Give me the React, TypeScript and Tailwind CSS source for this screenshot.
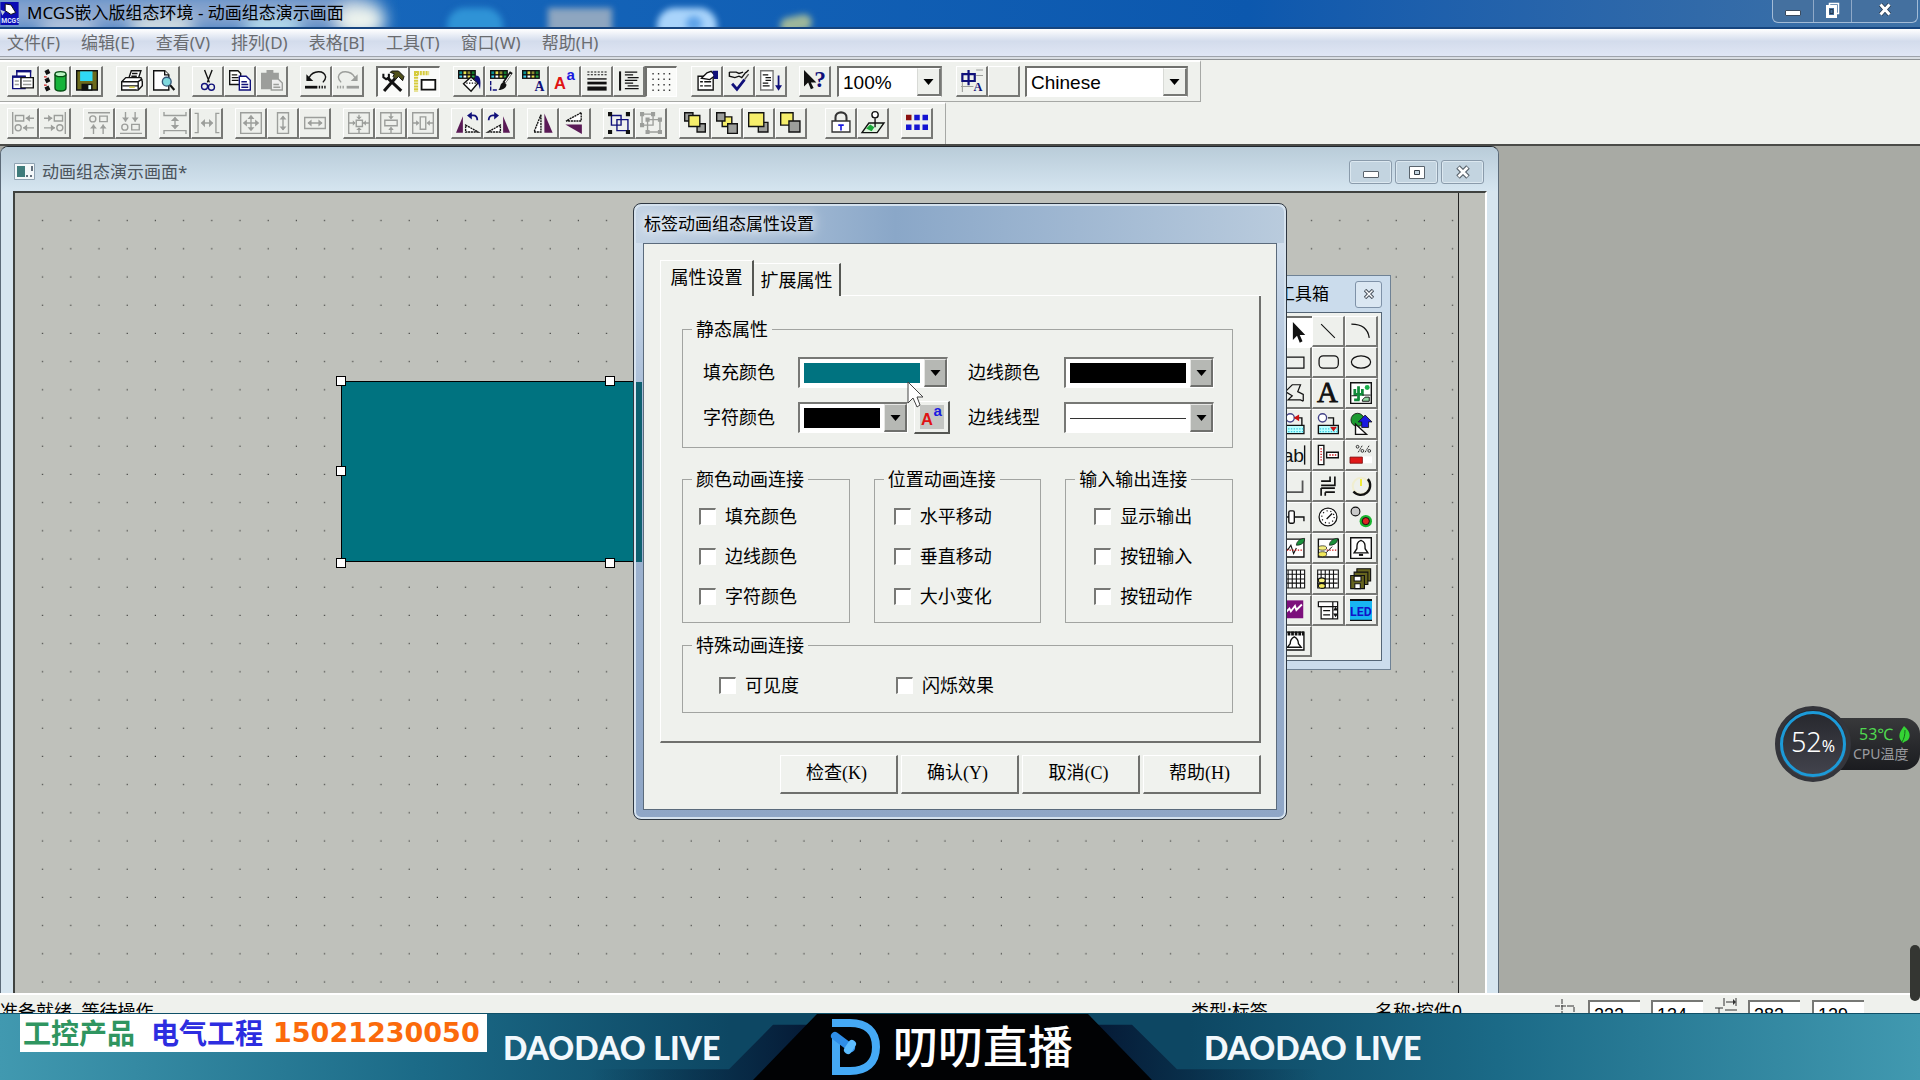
import React from "react";

const UI = "font-['Noto_Sans','Noto_Sans_CJK_SC',sans-serif]";
const SONG = "font-['Liberation_Serif','Noto_Sans_CJK_SC',serif]";

const K = "#111";
const N = "#10107a";
const G = "#9c9e9b";

/* ---------- toolbar drawings, 16 x 16 grid ---------- */

const palette = (
  <>
    <path d="M0 0h13v6.500H0z" fill={K} />
    <path d="M1 1h2v2H1z" fill="#0b8f8f" />
    <path d="M4 1h2v2H4z" fill="#e8e04a" />
    <path d="M7 1h2v2H7z" fill="#8b8b30" />
    <path d="M10 1h2v2h-2z" fill="#157a2d" />
    <path d="M1 4h2v1.500H1z" fill="#3fd4f0" />
    <path d="M4 4h2v1.500H4z" fill="#fff" />
    <path d="M7 4h2v1.500H7z" fill="#e8e04a" />
    <path d="M10 4h2v1.500h-2z" fill="#2fae4a" />
  </>
);

const icons: Record<string, React.ReactNode> = {
  newWin: (
    <g fill="#fff" stroke={N}>
      <path d="M3.5 .5h10v9h-10z" />
      <path d="M3 1h11" strokeWidth="1.500" />
      <path d="M.5 4.5h9v9h-9z" />
      <path d="M0 5h10" strokeWidth="1.500" />
      <path d="M6.5 5.500h9v7.500h-9z" stroke={K} />
      <path d="M8 8h6M8 10.500h6M2 8h3M2 10.500h3" stroke={G} />
    </g>
  ),
  db: (
    <g>
      <path d="M1 1l2-1 1 2-2 1zM1 7l2-1 1 2-2 1zM1 13l2-1 1 2-2 1z" stroke={K} fill={K} />
      <path d="M0 5h2M0 11h2" stroke="#c22" />
      <path d="M8 3v10c0 3 8 3 8 0V3" fill="#16b33a" stroke="#064d14" />
      <ellipse cx="12" cy="3" rx="4" ry="1.8" fill="#b9f5c2" stroke="#064d14" />
    </g>
  ),
  save: (
    <g>
      <path d="M.5 .5h15v14h-15z" fill="#6b6a1c" stroke={K} />
      <path d="M3 1h9v7H3z" fill="#2fd8f5" />
      <path d="M4 10h8v5H4z" fill={K} />
      <path d="M9 11h2v3H9z" fill="#dff" />
    </g>
  ),
  print: (
    <g fill="#fff" stroke={K}>
      <path d="M5.5 6.5l2-6h7l-2 6z" />
      <path d="M8 2.500h4M7.500 4.500h4" />
      <path d="M.5 8.500l3-3h11l1 3v3l-3 3h-12z" />
      <path d="M.5 8.500h12v6M12.500 8.500l3-2M1 11.500h11" />
      <path d="M6 12.500h4" stroke="#d9cf3f" />
    </g>
  ),
  preview: (
    <g fill="#fff" stroke={K}>
      <path d="M.5 .5h8l3 3v11h-11z" />
      <path d="M8.500 .5v3h3" />
      <circle cx="10" cy="8.500" r="3.200" fill="#7fd9de" stroke="#357" />
      <path d="M12.500 11l3 3.500" strokeWidth="1.600" />
    </g>
  ),
  cut: (
    <g fill="none">
      <path d="M5.500 0l3.500 9M11 0L7.500 9" stroke={K} />
      <circle cx="5.500" cy="12" r="2.200" stroke={N} />
      <circle cx="10.500" cy="12.500" r="2.200" stroke={N} />
    </g>
  ),
  copy: (
    <g fill="#fff" stroke={N}>
      <path d="M.5 .5h6l2 2v8h-8z" stroke={K} />
      <path d="M2 3.500h4M2 5.500h5M2 7.500h5" stroke={K} />
      <path d="M7.500 4.500h5l3 3v7h-8z" />
      <path d="M9 8.500h4M9 10.500h5M9 12.500h5" />
    </g>
  ),
  paste: (
    <g>
      <path d="M0 2h4V0h5v2h4v12H0z" fill={G} />
      <path d="M7.500 6.500h5l3 3v5h-8z" fill="#eee" stroke={G} />
      <path d="M9 10.500h4M9 12.500h5" stroke={G} />
    </g>
  ),
  undo: (
    <g fill="none" stroke={K}>
      <path d="M3 5.500C6 0 14 0 15 5c0 2-1 3-2 4" />
      <path d="M1 3v5h5z" fill={K} stroke="none" />
      <path d="M0 12.500h9" strokeWidth="2" />
      <path d="M10 12.500h6" strokeWidth="2" strokeDasharray="1 1" />
    </g>
  ),
  redo: (
    <g fill="none" stroke={G}>
      <path d="M13 5.500C10 0 2 0 1 5c0 2 1 3 2 4" />
      <path d="M15 3v5h-5z" fill={G} stroke="none" />
      <path d="M16 12.500H7" strokeWidth="2" />
      <path d="M0 12.500h6" strokeWidth="2" strokeDasharray="1 1" />
    </g>
  ),
  tools: (
    <g fill="none" stroke={K}>
      <path d="M1.500 14.500l8-9" strokeWidth="2.200" />
      <path d="M4 5l10 9.500" strokeWidth="2.200" />
      <path d="M7 0h5l4 4-1 3-3-3-2 2-2-2 1-2-3-1z" fill="#4f4f1a" strokeWidth=".7" />
      <path d="M1 2l0 2.500 2 1.500 2-1.500L5 2" strokeWidth="1.500" />
    </g>
  ),
  ruler: (
    <g fill="none">
      <path d="M0 1.500h11M1.500 0v15" stroke="#d6cb3c" strokeWidth="3" strokeDasharray="1.500 .6" />
      <path d="M5.500 6.500h10v7h-10z" fill="#fff" stroke={K} strokeWidth="1.300" />
    </g>
  ),
  fill: (
    <g>
      {palette}
      <path d="M4 10l5.500-5 5 4.500-5 6z" fill="#fff" stroke={K} />
      <path d="M9.500 1v7M6 9.500h7" stroke={K} strokeDasharray="1 1" />
      <path d="M13 4c3 0 4 3 3 10-1-3-1-5-4-6.500z" fill={N} />
    </g>
  ),
  pen: (
    <g>
      {palette}
      <path d="M.5 8v6.500h5" fill="none" stroke={N} strokeDasharray="3 1" />
      <path d="M15.500 1.500l-5.500 8" stroke={K} strokeWidth="2.400" />
      <path d="M15 3l-4 6" stroke="#fff" strokeWidth=".8" />
      <path d="M10 9c-3 0-2 4-4 5.500 4 0 6-2 6-4z" fill={K} />
    </g>
  ),
  textColor: (
    <g>
      {palette}
      <text x="9" y="15.500" fontSize="10" fontWeight="700" fontFamily="Liberation Serif" fill={N}>A</text>
    </g>
  ),
  font: (
    <g fontFamily="Liberation Sans" fontWeight="700">
      <text x="0" y="14" fontSize="12" fill="#e01313">A</text>
      <text x="9" y="7" fontSize="11" fill="#1a1ae0">a</text>
    </g>
  ),
  lines: (
    <g stroke={K}>
      <path d="M1 1.500h14M1 3.500h14" strokeDasharray="1.500 1" strokeWidth=".8" />
      <path d="M1 6.500h14" />
      <path d="M1 9.500h14" strokeWidth="2" />
      <path d="M1 13.500h14" strokeWidth="3" />
    </g>
  ),
  align: (
    <g stroke={K}>
      <path d="M1.500 1v14" strokeWidth="1.500" />
      <path d="M5 1.500h9M5 3.500h6M7 5.500h8M5 7.500h9M5 9.500h6M7 11.500h8M5 13.500h10" strokeWidth=".9" />
    </g>
  ),
  grid: (
    <path d="M1 2h15M1 6h15M1 10h15M1 14h15" stroke="#333" strokeDasharray="1 3" />
  ),
  props: (
    <g fill="#fff" stroke={K}>
      <path d="M1.500 4.500h11v10h-11z" />
      <path d="M3 8.500h2M6 8.500h5M3 11.500h2M6 11.500h5" />
      <path d="M4 6l4-4 3-1 3 3-4 3z" />
      <path d="M12.500 1h3v5h-2z" fill={N} stroke={N} />
    </g>
  ),
  check: (
    <g fill="none" stroke={K}>
      <path d="M1 1.500h5l2 1 3-1M1 1.500v3l4 1 3-1 2 1 3-4M13 2l2-2" />
      <path d="M3 10l3.500 4L12 7" stroke={N} strokeWidth="2" />
      <path d="M12 7l3-4" stroke="#555" />
    </g>
  ),
  sort: (
    <g fill="#fff" stroke={K}>
      <path d="M.5 .5h9v14h-9z" stroke="#777" />
      <path d="M2 3.500h4M4 5.500h4M4 7.500h4M2 9.500h4M2 11.500h5" />
      <path d="M13.500 4v9" stroke={N} strokeWidth="1.300" />
      <path d="M11 11h5l-2.500 4z" fill={N} stroke="none" />
    </g>
  ),
  help: (
    <g>
      <path d="M0 0v12l3-3 2 5 2-1-2-4h4z" fill={K} />
      <text x="7.500" y="12" fontSize="17" fontWeight="700" fontFamily="Liberation Serif" fill={N}>?</text>
    </g>
  ),
  lang: (
    <g fill="none">
      <path d="M1 2v14M11 0h5M11 4h5M0 12h9" stroke={G} strokeWidth=".8" />
      <path d="M1 3h9v5H1zM5.500 0v11" stroke={N} strokeWidth="1.600" />
      <text x="9" y="15" fontSize="9" fontWeight="700" fontFamily="Liberation Serif" fill={N}>A</text>
    </g>
  ),
  blank: null,
  alignL: (
    <g fill="none" stroke={G}>
      <path d="M.5 0v16M2.500 2.500h6v4h-6zM10 4.500h6M8 11.500h8" />
      <circle cx="4.500" cy="11.500" r="2.200" />
      <path d="M13 2l-3 2.500 3 2.500zM11 9l-3 2.500 3 2.500z" fill={G} stroke="none" />
    </g>
  ),
  alignR: (
    <g fill="none" stroke={G}>
      <path d="M15.500 0v16M7.500 2.500h6v4h-6zM0 4.500h6M0 11.500h8" />
      <circle cx="11.500" cy="11.500" r="2.200" />
      <path d="M3 2l3 2.500-3 2.500zM5 9l3 2.500-3 2.500z" fill={G} stroke="none" />
    </g>
  ),
  alignT: (
    <g fill="none" stroke={G}>
      <path d="M0 .5h16M8.500 3h5.500v4H8.500zM4 9v7M11 9v7" />
      <circle cx="3.500" cy="5" r="2.200" />
      <path d="M1.500 12L4 9l2.500 3zM8.500 12L11 9l2.500 3z" fill={G} stroke="none" />
    </g>
  ),
  alignB: (
    <g fill="none" stroke={G}>
      <path d="M0 15.500h16M8.500 9h5.500v4H8.500zM4 0v7M11 0v7" />
      <circle cx="3.500" cy="11" r="2.200" />
      <path d="M1.500 4L4 7l2.500-3zM8.500 4L11 7l2.500-3z" fill={G} stroke="none" />
    </g>
  ),
  spaceV: (
    <g fill="none" stroke={G}>
      <path d="M0 0v2.500h16V0M0 16v-2.500h16V16M8 4v8" />
      <path d="M5 6.500L8 3.500l3 3zM5 9.500l3 3 3-3z" fill={G} stroke="none" />
    </g>
  ),
  spaceH: (
    <g fill="none" stroke={G}>
      <path d="M-1 1h2.500v14H-1M17 1h-2.500v14H17M4 8h8" />
      <path d="M6.500 5L3.500 8l3 3zM9.500 5l3 3-3 3z" fill={G} stroke="none" />
    </g>
  ),
  sizeAll: (
    <g fill="none" stroke={G}>
      <path d="M.5 .5h15v15H.5zM8 3v10M3 8h10" />
      <path d="M5.500 5L8 2l2.500 3zM5.500 11L8 14l2.500-3zM5 5.500L2 8l3 2.500zM11 5.500L14 8l-3 2.500z" fill={G} stroke="none" />
    </g>
  ),
  sizeV: (
    <g fill="none" stroke={G}>
      <path d="M4 .5h8v15H4zM8 3v10" />
      <path d="M5.500 5.500L8 2.500l2.500 3zM5.500 10.500l2.500 3 2.500-3z" fill={G} stroke="none" />
    </g>
  ),
  sizeH: (
    <g fill="none" stroke={G}>
      <path d="M.5 4h15v8H.5zM3 8h10" />
      <path d="M5.500 5.500L2.500 8l3 2.500zM10.500 5.500l3 2.500-3 2.500z" fill={G} stroke="none" />
    </g>
  ),
  ctrAll: (
    <g fill="none" stroke={G}>
      <path d="M.5 .5h15v15H.5zM6 6h4.500v4.500H6zM8 2v3M8 12v3M1 8h4M11 8h4" />
      <path d="M6 3.500h4L8 5.500zM6 13h4l-2-2zM3.500 6v4l2-2zM13 6v4l-2-2z" fill={G} stroke="none" />
    </g>
  ),
  ctrV: (
    <g fill="none" stroke={G}>
      <path d="M.5 .5h15v15H.5zM3.500 6h9v4h-9zM8 1v3M8 12v3" />
      <path d="M6 3h4L8 5.500zM6 13h4l-2-2.500z" fill={G} stroke="none" />
    </g>
  ),
  ctrH: (
    <g fill="none" stroke={G}>
      <path d="M.5 .5h15v15H.5zM6 3.500h4v9H6zM1 8h3M12 8h3" />
      <path d="M3 6v4l2.500-2zM13 6v4l-2.500-2z" fill={G} stroke="none" />
    </g>
  ),
  rotL: (
    <g>
      <path d="M5 3v12H0z" fill="#5a1a56" />
      <path d="M7 9.500l9 5H7z" fill="#fff" stroke={K} strokeDasharray="1.500 .5" />
      <path d="M10 2.500h2.500c2 0 3 1.500 3 3.500" fill="none" stroke={N} strokeWidth="1.300" />
      <path d="M11.500 0v5.500L8 2.500z" fill={N} />
    </g>
  ),
  rotR: (
    <g>
      <path d="M11 3v12h5z" fill="#5a1a56" />
      <path d="M9 9.500l-9 5h9z" fill="#fff" stroke={K} strokeDasharray="1.500 .5" />
      <path d="M6 2.500H3.500c-2 0-3 1.500-3 3.500" fill="none" stroke={N} strokeWidth="1.300" />
      <path d="M4.500 0v5.500L8 2.500z" fill={N} />
    </g>
  ),
  flipH: (
    <g>
      <path d="M6.500 2v12.500h-5z" fill="#fff" stroke={K} strokeDasharray="1.500 .5" />
      <path d="M9 1v14h6z" fill="#5a1a56" />
    </g>
  ),
  flipV: (
    <g>
      <path d="M12.500 .5v6h-11z" fill="#fff" stroke={K} strokeDasharray="1.500 .5" />
      <path d="M13 16V9H1z" fill="#5a1a56" />
    </g>
  ),
  group: (
    <g>
      <path d="M2.500 2.500h7v7h-7zM6.500 5.500h8v8h-8z" fill="#f0f1ee" stroke={N} />
      <path d="M0 0h3v3H0zM13 0h3v3h-3zM0 13h3v3H0zM13 13h3v3h-3z" fill={K} />
    </g>
  ),
  ungroup: (
    <g>
      <path d="M1.500 1.500h8v8h-8zM5.500 5.500h9v9h-9z" fill="#f0f1ee" stroke={G} />
      <path d="M0 0h3v3H0zM8 0h3v3H8zM0 8h3v3H0zM4 4h3v3H4zM13 4h3v3h-3zM4 13h3v3H4zM13 13h3v3h-3z" fill={G} />
    </g>
  ),
  front: (
    <g stroke={K}>
      <path d="M.5 .5h6v6h-6zM9.500 8.500h6v6h-6z" fill={G} />
      <path d="M3.500 2.500h8v8h-8z" fill="#f6ee6b" />
    </g>
  ),
  back: (
    <g stroke={K}>
      <path d="M4.500 3.500h7v7h-7z" fill="#f6ee6b" />
      <path d="M.5 .5h6v6h-6zM8.500 8.500h7v7h-7z" fill={G} />
    </g>
  ),
  forward: (
    <g stroke={K}>
      <path d="M7.500 7.500h7v7h-7z" fill={G} />
      <path d="M.5 .5h11v10H.5z" fill="#f6ee6b" />
    </g>
  ),
  backward: (
    <g stroke={K}>
      <path d="M.5 .5h9v9h-9z" fill="#f6ee6b" />
      <path d="M6.500 6.500h8v8h-8z" fill={G} />
    </g>
  ),
  lock: (
    <g fill="#fff" stroke="#333">
      <path d="M4 7V4c0-5 8-5 8 0v3" fill="none" strokeWidth="1.500" />
      <path d="M1.500 6.500h13v8h-13z" />
      <path d="M6 9.500h4M8 9.500v4" stroke="#1a1ae0" strokeWidth="1.200" />
    </g>
  ),
  pin: (
    <g stroke={K}>
      <path d="M5 8h11l-5 7H0z" fill="#dff3df" />
      <path d="M3 12l3-3 3 2-2 3z" fill="#19a838" stroke="none" />
      <circle cx="9.500" cy="2" r="2.300" fill="#fff" />
      <path d="M9.500 4.500V11" />
    </g>
  ),
  dots: (
    <g fill="#1414d2">
      <path d="M0 2h4v4H0z" fill="#8a1010" />
      <path d="M6 2h4v4H6zM12 2h4v4h-4zM0 9h4v4H0zM6 9h4v4H6zM12 9h4v4h-4z" />
    </g>
  ),

  /* toolbox */
  arrow: <path d="M5 0v13l3-3 2 5 2-1-2-4.500h4z" fill={K} />,
  line: <path d="M3 3l10 10" stroke={K} strokeWidth=".8" />,
  arc: <path d="M1 3c7 0 12 3 13 10" stroke={K} fill="none" strokeWidth=".9" />,
  rect: <path d="M0 4.500h14.500v8H0z" stroke={K} fill="none" strokeWidth=".9" />,
  rrect: <rect x="1.500" y="3.500" width="14" height="9" rx="3" stroke={K} fill="none" strokeWidth=".9" />,
  ellipse: <ellipse cx="8" cy="8" rx="7" ry="4.500" stroke={K} fill="none" strokeWidth=".9" />,
  poly: <path d="M14 14l-2-1H3l3-3-5-3M1 7l5-5h6l-2 5 4 2v5" stroke={K} fill="none" strokeWidth=".9" />,
  bigA: <text x="0" y="14.500" fontSize="21" fontFamily="Liberation Serif" fill={K} stroke={K} strokeWidth=".6">A</text>,
  cactus: (
    <g>
      <path d="M.5 .5h15v15H.5z" fill="#fff" stroke={K} />
      <path d="M3.500 5v4h5.500V5M6.200 3v10M3 13h4" stroke="#0f8a3a" strokeWidth="2" fill="none" />
      <circle cx="12.500" cy="4" r="1.800" fill="#18b04a" />
      <path d="M1 10h4M9 9.500h6M9 13l2-2h3v3H9z" stroke={K} strokeWidth=".7" fill="#8fd8a0" />
    </g>
  ),
  pumpA: (
    <g fill="none" stroke={K}>
      <path d="M0 9h14.500v6H0z" fill="#bff" />
      <path d="M1 11.500h13M1 13.500h13" stroke="#39c9e0" strokeDasharray="1 1" />
      <circle cx="4.500" cy="3.500" r="3" fill="#fff" stroke="#448" />
      <path d="M8 3.500h5v5.500" />
      <path d="M11 1v5L7 3.500z" fill="#c11" stroke="none" />
    </g>
  ),
  pumpB: (
    <g fill="none" stroke={K}>
      <path d="M1 9h14.500v6H1z" fill="#bff" />
      <path d="M2 11.500h13M2 13.500h13" stroke="#39c9e0" strokeDasharray="1 1" />
      <circle cx="4" cy="3.500" r="3" fill="#fff" stroke="#448" />
      <path d="M8 3.500h4v5.500" />
      <path d="M9.500 10h5L12 13.500z" fill="#c11" stroke="none" />
    </g>
  ),
  shapes: (
    <g>
      <circle cx="5.500" cy="5" r="4.800" fill="#1b9a30" stroke={K} strokeWidth=".6" />
      <path d="M4 8v7.500h8z" fill="#fff" stroke={K} />
      <path d="M11 1.500l5 5h-2.500v4h-5v-4H6z" fill="#1a1ae0" stroke={K} strokeWidth=".6" />
    </g>
  ),
  ab: (
    <g>
      <text x="-1" y="13" fontSize="14" fontFamily="Liberation Sans" fill={K}>ab</text>
      <path d="M15 1v14" stroke={K} />
    </g>
  ),
  bars: (
    <g fill="#fff" stroke={K}>
      <path d="M1 1h4v14H1zM7 6h8.500v4H7z" />
      <path d="M3 3v10M9 8h6" stroke="#c11" strokeDasharray="1 1" />
    </g>
  ),
  percent: (
    <g>
      <path d="M0 9h16v5H0z" fill="#fff" />
      <path d="M0 9.500h9v4.500H0z" fill="#e01818" stroke="#7a0d0d" strokeWidth=".6" />
      <path d="M6 6l3-5M11 6l3-5" stroke={K} strokeWidth=".7" strokeDasharray="1 .5" />
      <circle cx="5.500" cy="2" r="1" fill="none" stroke={K} strokeWidth=".6" />
      <circle cx="9" cy="5" r="1" fill="none" stroke={K} strokeWidth=".6" />
      <circle cx="14" cy="5" r="1" fill="none" stroke={K} strokeWidth=".6" />
    </g>
  ),
  corner: <path d="M0 12.500h13.500V4" stroke="#555" strokeWidth="1.300" fill="none" />,
  pipes: (
    <g fill="none" stroke={K} strokeWidth="1.200">
      <path d="M3 4.500h6.500V1M3 7.500h10V1" />
      <path d="M3 9.500h10M3 9.500V15M6 12.500V15M6 12.500h7" />
    </g>
  ),
  ring: (
    <g fill="none">
      <circle cx="8" cy="8" r="6" stroke="#f0eed0" strokeWidth="1.500" />
      <path d="M13 3a6.800 6.800 0 1 1-10.500 9" stroke={K} strokeWidth="1.700" />
      <path d="M8 3v5" stroke="#f0ea38" strokeWidth="1.500" />
    </g>
  ),
  slider: (
    <g fill="#fff" stroke={K}>
      <path d="M0 8h14.500v3" fill="none" />
      <rect x="3.500" y="3.500" width="4" height="9" rx="1" />
    </g>
  ),
  gauge: (
    <g fill="#fff" stroke={K} strokeWidth=".9">
      <circle cx="8" cy="8" r="6.500" />
      <circle cx="8" cy="8" r="4.500" strokeDasharray=".8 2" />
      <path d="M7 9.500l4-4" />
    </g>
  ),
  bulbs: (
    <g>
      <circle cx="4" cy="4" r="3.200" fill="#c9c9c9" stroke={K} strokeWidth=".8" />
      <circle cx="11.500" cy="11" r="4.500" fill="#19b52e" />
      <circle cx="11.500" cy="11" r="2.600" fill="#e02424" stroke={K} strokeWidth=".7" />
    </g>
  ),
  curveA: (
    <g fill="none">
      <path d="M0 1.500h14.500v13H0" fill="#fff" stroke={K} />
      <path d="M0 9h3l2-3 2 6 2-4" stroke={K} strokeWidth=".8" />
      <path d="M0 9.500h14" stroke="#c11" strokeDasharray="1 1" />
      <path d="M9 6c0-3 3-5 6-5 0 3-2 5-6 5z" fill="#19903a" stroke={K} strokeWidth=".5" />
    </g>
  ),
  curveB: (
    <g fill="none">
      <path d="M1 1.500h14.500v13H1z" fill="#fff" stroke={K} />
      <path d="M7 9.500h8" stroke="#c11" strokeDasharray="1 1" />
      <path d="M6 12l5-5" stroke={K} strokeWidth=".7" />
      <ellipse cx="4" cy="8" rx="3" ry="1.600" fill="#f6ef80" stroke={K} strokeWidth=".5" />
      <ellipse cx="4" cy="12.500" rx="3" ry="1.800" fill="#f1e75c" stroke={K} strokeWidth=".5" />
      <path d="M9 6c0-3 3-5 6-5 0 3-2 5-6 5z" fill="#19903a" stroke={K} strokeWidth=".5" />
    </g>
  ),
  bell: (
    <g fill="#fff" stroke={K}>
      <path d="M.5 .5h15v15H.5z" />
      <path d="M8 2.500c-3 1-3 3-3 6L3 11.500h10L11 8.500c0-3 0-5-3-6z" />
      <path d="M6.500 13h3" strokeWidth="1.500" />
    </g>
  ),
  table: (
    <g fill="#fff" stroke={K} strokeWidth=".8">
      <path d="M0 1.500h15v13H0z" />
      <path d="M0 4.500h15M0 8h15M0 11h15M3 1.500v13M6 1.500v13M9 1.500v13M12 1.500v13" />
    </g>
  ),
  tableDb: (
    <g fill="#fff" stroke={K} strokeWidth=".8">
      <path d="M.5 1.500h15v13H.5z" />
      <path d="M0 4.500h15M0 8h15M0 11h15M3 1.500v13M6 1.500v13M9 1.500v13M12 1.500v13" />
      <ellipse cx="3.500" cy="9" rx="2.500" ry="1.800" fill="#f6ef80" />
      <ellipse cx="3.500" cy="13" rx="2.500" ry="1.800" fill="#f1e75c" />
    </g>
  ),
  disks: (
    <g fill="#66641f" stroke={K} strokeWidth=".8">
      <path d="M5 .5h10v9H5z" />
      <path d="M3 3h10v9H3z" />
      <path d="M.5 5.500h10v9.500H.5z" />
      <path d="M3 6h5v3.500H3zM3.500 11.500h4V15h-4z" fill="#fff" />
    </g>
  ),
  script: (
    <g>
      <path d="M0 1h14v13H0z" fill="#7c0f7c" />
      <path d="M1 10l3-3 1 2 3-4 1 3 4-4" stroke="#fff" fill="none" strokeWidth="1.300" />
    </g>
  ),
  listbox: (
    <g fill="#fff" stroke={K} strokeWidth=".9">
      <path d="M1 2h14v3.500H1zM3 5.500h12v9H3zM11.500 2v12.500" />
      <path d="M4.500 8.500h5M4.500 11.500h5" />
      <path d="M12.500 8h2l-1-1.500zM12.500 11h2l-1 1.500z" fill={K} />
    </g>
  ),
  led: (
    <g>
      <path d="M0 0h16v15.500H0z" fill="#18b6f2" />
      <path d="M0 0h16v1.500H0zM0 15h16v1H0z" fill={K} />
      <text x="0" y="12.500" fontSize="9" fontFamily="Roboto" fontWeight="700" fill="#1212c8">LED</text>
    </g>
  ),
  bellBar: (
    <g fill="#fff" stroke={K}>
      <path d="M0 1.500h14.500v13H0z" />
      <path d="M0 2.500h14.500" strokeWidth="3" strokeDasharray="2 .6" />
      <path d="M7.500 5c-2 1-3 3-3 5l-2 2.500h10l-2-2.500c0-2-1-4-3-5z" />
    </g>
  ),
};

function Icon({ name, cls = "h-[22px] w-[22px]" }: { name: string; cls?: string }) {
  return (
    <svg viewBox="0 0 16 16" className={`${cls} shrink-0 overflow-visible`} aria-hidden="true">
      {icons[name]}
    </svg>
  );
}

function ToolButton({ name, pressed = false }: { name: string; pressed?: boolean }) {
  return (
    <button
      type="button"
      aria-label={name}
      aria-pressed={pressed}
      className={
        pressed
          ? "flex h-[31px] w-8 items-center justify-center border-t-2 border-l-2 border-r border-b border-t-[#6f706d] border-l-[#6f706d] border-r-white border-b-white bg-[#fafbf9]"
          : "flex h-[31px] w-8 items-center justify-center border-t border-l border-r-2 border-b-2 border-t-white border-l-white border-r-[#777875] border-b-[#777875] bg-[#eef0ec]"
      }
    >
      <Icon name={name} />
    </button>
  );
}

function Group({ names, pressed = [], cls = "ml-3" }: { names: string[]; pressed?: string[]; cls?: string }) {
  return (
    <div className={`${cls} flex`}>
      {names.map((n) => (
        <ToolButton key={n} name={n} pressed={pressed.includes(n)} />
      ))}
    </div>
  );
}

function Arrow() {
  return (
    <svg viewBox="0 0 10 6" className="h-[6px] w-[11px]" aria-hidden="true">
      <path d="M0 0h10L5 6z" fill="#000" />
    </svg>
  );
}

function TextSelect({ value, label, cls }: { value: string; label: string; cls: string }) {
  return (
    <div className={`${cls} relative flex h-[31px] border-t-2 border-l-2 border-r border-b border-t-[#6f706d] border-l-[#6f706d] border-r-[#8b8c89] border-b-white bg-white`}>
      <select
        aria-label={label}
        className="w-full appearance-none bg-transparent pt-px pl-1 font-['Liberation_Sans',sans-serif] text-[19px] leading-7 text-black"
      >
        <option>{value}</option>
      </select>
      <span className="pointer-events-none absolute top-0 right-0 flex h-7 w-6 items-center justify-center border-t border-l border-r-2 border-b-2 border-t-white border-l-[#d8dad6] border-r-[#777875] border-b-[#777875] bg-[#eef0ec]">
        <Arrow />
      </span>
    </div>
  );
}

function SwatchSelect({ label, value, swatch, cls }: { label: string; value: string; swatch: string; cls: string }) {
  return (
    <div className={`${cls} relative flex h-[31px] items-stretch border-t-2 border-l-2 border-r border-b border-t-[#777875] border-l-[#777875] border-r-white border-b-white bg-white`}>
      <span className="flex flex-1 items-center px-1">
        <span className={`${swatch} w-full`} />
      </span>
      <span className="flex w-[23px] items-center justify-center border-t border-l border-r-2 border-b-2 border-t-[#e6e6e4] border-l-[#e6e6e4] border-r-[#6f706d] border-b-[#6f706d] bg-[#b6b8b4]">
        <Arrow />
      </span>
      <select aria-label={label} className="absolute inset-0 h-full w-full opacity-0">
        <option>{value}</option>
      </select>
    </div>
  );
}

function Check({ label, cls = "" }: { label: string; cls?: string }) {
  return (
    <label className={`${cls} flex h-6 items-center gap-[9px] text-lg leading-6`}>
      <input
        type="checkbox"
        className="h-[17px] w-[17px] shrink-0 appearance-none border-t-2 border-l-2 border-r border-b border-t-[#777875] border-l-[#777875] border-r-white border-b-white bg-white"
      />
      {label}
    </label>
  );
}

function Box({ title, cls = "", children }: { title: string; cls?: string; children: React.ReactNode }) {
  return (
    <fieldset className={`${cls} min-w-0 border border-[#a2a4a1]`}>
      <legend className="ml-[9px] px-1 text-lg leading-6">{title}</legend>
      {children}
    </fieldset>
  );
}

function TitleBar() {
  return (
    <header className="relative flex h-[29px] shrink-0 items-start overflow-hidden border-b-2 border-[#16457f] bg-linear-to-r from-[#1a6cc0] via-[#0c58ae] via-65% to-[#3f72a6]">
      <div aria-hidden="true" className="absolute inset-0">
        <div className="absolute -top-2 -left-10 h-10 w-[410px] bg-[#8fa8cf] blur-md" />
        <div className="absolute top-4 left-10 h-6 w-14 rounded-full bg-[#b7c6dc] blur-sm" />
        <div className="absolute top-4 left-[130px] h-5 w-16 rounded-full bg-[#dfe6e4] blur-sm" />
        <div className="absolute top-4 left-[245px] h-5 w-14 rounded-full bg-[#bfe3ef] blur-sm" />
        <div className="absolute top-1 left-[335px] h-8 w-[50px] rounded-full bg-[#eef4ee] blur-sm" />
        <div className="absolute top-2 left-[447px] h-9 w-14 rounded-full bg-[#2f93d6] blur-[3px]" />
        <div className="absolute top-2 left-[548px] h-8 w-16 bg-[#8ea6c0] blur-[3px]" />
        <div className="absolute top-2 left-[657px] h-9 w-[60px] rounded-full bg-[#a9d4fb] blur-[3px]" />
        <div className="absolute top-4 left-[686px] h-4 w-4 rounded-full bg-[#5fa3e8] blur-[3px]" />
        <div className="absolute top-4 left-[780px] h-4 w-8 -rotate-12 rounded-full bg-[#9db79b] blur-[3px]" />
      </div>
      <svg viewBox="0 0 19 24" className="relative mt-[2px] h-[23px] w-[19px] shrink-0" aria-hidden="true">
        <path d="M0 0h19v24H0z" fill="#0b0bb4" />
        <path d="M5 2l6 1 5 8-5 2-6-4z" fill="#fff" stroke="#111" />
        <path d="M0 8l5 2-3 4z" fill="#bcd" />
        <text x="1" y="22" fontSize="7" fontWeight="700" fontFamily="Roboto" fill="#dfe6ff">MCGS</text>
      </svg>
      <h1 className="relative ml-2 text-[17px] leading-[26px] text-black">MCGS嵌入版组态环境 - 动画组态演示画面</h1>
      <div className="relative mr-[2px] ml-auto flex h-[23px] overflow-hidden rounded-b-md border border-t-0 border-[#a3bbd6] bg-[#44709f]">
        <button type="button" aria-label="最小化" className="flex w-[41px] justify-center border-r border-[#8fa9c8] pt-[10px]">
          <span className="h-[6px] w-4 rounded-[1px] border border-[#3b4c60] bg-white" />
        </button>
        <button type="button" aria-label="还原" className="flex w-[38px] justify-center border-r border-[#8fa9c8] pt-[2px]">
          <svg viewBox="0 0 16 16" className="h-4 w-4">
            <path d="M4.500 1.500h9v10h-9z" fill="none" stroke="#fff" strokeWidth="1.500" />
            <path d="M2.500 4.500h8v10h-8z" fill="#44709f" stroke="#fff" strokeWidth="3" />
            <path d="M5 7.500h3v4H5z" fill="none" stroke="#26384d" />
          </svg>
        </button>
        <button type="button" aria-label="关闭" className="flex w-[65px] justify-center pt-[3px]">
          <svg viewBox="0 0 14 13" className="h-[13px] w-[14px]">
            <path d="M2.500 1.500l9 10M11.500 1.500l-9 10" stroke="#26384d" strokeWidth="4.500" />
            <path d="M2.500 1.500l9 10M11.500 1.500l-9 10" stroke="#fff" strokeWidth="3" />
          </svg>
        </button>
      </div>
    </header>
  );
}

function MenuBar() {
  const items = ["文件(F)", "编辑(E)", "查看(V)", "排列(D)", "表格[B]", "工具(T)", "窗口(W)", "帮助(H)"];
  return (
    <nav className="flex h-7 shrink-0 items-center gap-[21px] border-b border-[#9ea3ab] bg-linear-to-b from-white via-[#d3dcec] via-45% to-[#e0e6f4] pt-px pl-[7px]">
      {items.map((t) => (
        <button key={t} type="button" className="text-[17px] leading-6 whitespace-nowrap text-[#6a6c70]">
          {t}
        </button>
      ))}
    </nav>
  );
}

function Toolbars() {
  return (
    <div className="flex shrink-0 flex-col border-t border-b-2 border-t-[#8f9295] border-b-[#4a4b48] bg-[#eff1ed]">
      <div className="flex w-[1201px] items-start border-t-2 border-r border-b border-t-white border-r-[#a6a8a5] border-b-[#a6a8a5] py-1">
        <Group cls="ml-[7px]" names={["newWin", "db", "save"]} />
        <Group cls="ml-[13px]" names={["print", "preview"]} />
        <Group names={["cut", "copy", "paste"]} />
        <Group names={["undo", "redo"]} />
        <Group names={["tools", "ruler"]} pressed={["tools", "ruler"]} />
        <Group cls="ml-[13px]" names={["fill", "pen", "textColor", "font", "lines", "align", "grid"]} pressed={["grid"]} />
        <Group cls="ml-[14px]" names={["props", "check", "sort"]} />
        <Group names={["help"]} />
        <TextSelect label="缩放" value="100%" cls="ml-[6px] w-[105px]" />
        <Group cls="ml-[14px]" names={["lang", "blank"]} />
        <TextSelect label="语言" value="Chinese" cls="ml-[5px] w-[163px]" />
      </div>
      <div className="flex w-[946px] items-start border-t-2 border-r border-t-white border-r-[#a6a8a5] pt-1 pb-[5px]">
        <Group cls="ml-[7px]" names={["alignL", "alignR"]} />
        <Group names={["alignT", "alignB"]} />
        <Group names={["spaceV", "spaceH"]} />
        <Group names={["sizeAll", "sizeV", "sizeH"]} />
        <Group names={["ctrAll", "ctrV", "ctrH"]} />
        <Group names={["rotL", "rotR"]} />
        <Group names={["flipH", "flipV"]} />
        <Group names={["group", "ungroup"]} />
        <Group names={["front", "back", "forward", "backward"]} />
        <Group cls="ml-[18px]" names={["lock", "pin"]} />
        <Group names={["dots"]} />
      </div>
    </div>
  );
}

function FrameButton({ label, children }: { label: string; children: React.ReactNode }) {
  return (
    <button
      type="button"
      aria-label={label}
      className="flex h-6 w-[43px] items-center justify-center rounded-[3px] border border-[#8a9bab] bg-[#c3d4e0] shadow-[inset_0_0_0_1px_#dce8f0]"
    >
      {children}
    </button>
  );
}

function Handle({ cls }: { cls: string }) {
  return <span className={`${cls} absolute h-[10px] w-[10px] border border-black bg-white`} />;
}

function DocumentWindow() {
  return (
    <section className="absolute inset-y-0 left-0 flex w-[1499px] flex-col overflow-hidden rounded-t-lg border-t border-r border-l border-t-[#20262c] border-r-[#5c6a78] border-l-[#5c6a78] bg-[#d6e5ef]">
      <div className="flex h-11 shrink-0 items-center bg-linear-to-b from-[#b9ccd9] to-[#d5e5f0] pt-[6px] pr-[14px] pl-[13px]">
        <svg viewBox="0 0 22 18" className="h-[18px] w-[22px]" aria-hidden="true">
          <path d="M.5 .5h20v16H.5z" fill="#f4f8fa" stroke="#8fa3b2" />
          <path d="M3 3h8v11H3z" fill="#3f7c7c" />
          <path d="M12 13h2M16 13h2M18 3v5" stroke="#345" strokeWidth="1.500" />
        </svg>
        <h2 className="ml-[6px] text-[17px] leading-6 text-[#4b545c]">动画组态演示画面*</h2>
        <div className="ml-auto flex gap-[3px]">
          <FrameButton label="最小化窗口">
            <span className="mt-1 h-[7px] w-4 rounded-[1px] border border-[#59636c] bg-white" />
          </FrameButton>
          <FrameButton label="最大化窗口">
            <svg viewBox="0 0 16 13" className="h-[13px] w-4">
              <path d="M.5 .5h15v12H.5z" fill="#fff" stroke="#59636c" />
              <path d="M5.500 4.500h5v4h-5z" fill="#c3d4e0" stroke="#333d46" />
            </svg>
          </FrameButton>
          <FrameButton label="关闭窗口">
            <svg viewBox="0 0 16 14" className="h-[14px] w-4">
              <path d="M3 2l10 10M13 2L3 12" stroke="#59636c" strokeWidth="5" />
              <path d="M3.500 2.500l9 9M12.500 2.500l-9 9" stroke="#fff" strokeWidth="2.600" />
            </svg>
          </FrameButton>
        </div>
      </div>
      <div className="mr-[11px] ml-3 flex flex-1 border-t-2 border-r-2 border-l-2 border-t-[#3f423f] border-r-white border-l-[#3f423f] bg-[#bfc1bb]">
        <div className="relative w-[1444px] border-r border-[#222]">
          <svg className="absolute inset-0 h-full w-full" aria-hidden="true">
            <defs>
              <pattern id="dots" width="28.2" height="28.2" patternUnits="userSpaceOnUse">
                <rect x="27" y="27" width="1.200" height="1.200" fill="#3c3d3b" />
              </pattern>
            </defs>
            <rect width="100%" height="100%" fill="url(#dots)" />
          </svg>
          <div className="absolute top-[188px] left-[326px] h-[181px] w-[540px] border border-black bg-[#007380]">
            <Handle cls="-top-[6px] -left-[6px]" />
            <Handle cls="-top-[6px] left-[263px]" />
            <Handle cls="top-[84px] -left-[6px]" />
            <Handle cls="-bottom-[7px] -left-[6px]" />
            <Handle cls="-bottom-[7px] left-[263px]" />
          </div>
        </div>
      </div>
    </section>
  );
}

const toolboxNames = [
  "arrow", "line", "arc",
  "rect", "rrect", "ellipse",
  "poly", "bigA", "cactus",
  "pumpA", "pumpB", "shapes",
  "ab", "bars", "percent",
  "corner", "pipes", "ring",
  "slider", "gauge", "bulbs",
  "curveA", "curveB", "bell",
  "table", "tableDb", "disks",
  "script", "listbox", "led",
  "bellBar",
];

function Toolbox() {
  return (
    <aside className="absolute top-[275px] left-[1265px] w-[126px] border border-[#6f8295] bg-[#cbdcec] px-2 pb-2">
      <div className="flex h-9 items-center justify-between pl-1">
        <h2 className="text-[17px] leading-6 text-black">工具箱</h2>
        <button
          type="button"
          aria-label="关闭工具箱"
          className="flex h-[27px] w-[27px] items-center justify-center rounded-[3px] border border-[#7f92a8] bg-[#dbe7f2]"
        >
          <svg viewBox="0 0 10 10" className="h-[10px] w-[10px]">
            <path d="M1 1l8 8M9 1L1 9" stroke="#4b545e" strokeWidth="3.500" />
            <path d="M1.500 1.500l7 7M8.500 1.500l-7 7" stroke="#fff" strokeWidth="1.400" />
          </svg>
        </button>
      </div>
      <div className="grid h-[349px] grid-cols-[33px_33px_33px] content-start border border-[#556677] bg-[#eff1ed] pt-[3px] pl-1">
        {toolboxNames.map((n, i) => (
          <button
            key={n}
            type="button"
            aria-label={n}
            className={
              i === 0
                ? "flex h-[31px] items-center justify-center border-t-2 border-l-2 border-t-[#6f706d] border-l-[#6f706d] bg-white"
                : "flex h-[31px] items-center justify-center border-t border-l border-r-2 border-b-2 border-t-white border-l-white border-r-[#777875] border-b-[#777875] bg-[#eef0ec]"
            }
          >
            <Icon name={n} />
          </button>
        ))}
      </div>
    </aside>
  );
}

function Dialog() {
  return (
    <section
      role="dialog"
      aria-labelledby="dialog-title"
      className="absolute top-[203px] left-[633px] flex w-[654px] flex-col rounded-lg border border-[#2d3640] bg-linear-to-b from-[#dbe7f2] via-[#a3b8d4] via-35% to-[#8fa6c6] px-[9px] pb-[9px] shadow-[inset_0_0_0_2px_#d5e2ee]"
    >
      <span aria-hidden="true" className="absolute top-[178px] left-[2px] h-[180px] w-[6px] bg-[#0d6070]" />
      <div className="-mx-[7px] mt-[2px] flex h-[37px] items-center rounded-t-md bg-linear-to-r from-[#c3d3e4] via-[#8aa7c8] via-40% to-[#b9cbdd] pb-[2px] pl-2">
        <h2 id="dialog-title" className="text-[17px] leading-6 text-black [text-shadow:0_0_10px_#ffffff,0_0_16px_#ffffff]">
          标签动画组态属性设置
        </h2>
      </div>
      <div className="flex flex-col border border-[#5b6b7c] bg-[#eff1ed] pt-4 pr-[15px] pb-[15px] pl-4">
        <div role="tablist" className="flex items-end">
          <button
            type="button"
            role="tab"
            aria-selected="true"
            className="h-9 w-[94px] border-t border-l border-r-2 border-t-white border-l-white border-r-[#555753] pb-1 text-lg leading-6"
          >
            属性设置
          </button>
          <button
            type="button"
            role="tab"
            aria-selected="false"
            className="h-[33px] w-[87px] border-t border-r-2 border-t-white border-r-[#555753] pb-px text-lg leading-6"
          >
            扩展属性
          </button>
          <span className="h-px flex-1 bg-white" />
        </div>
        <div role="tabpanel" className="border-r-2 border-b-2 border-l border-r-[#6f706d] border-b-[#6f706d] border-l-white pt-[21px] pr-[26px] pb-[28px] pl-[21px]">
          <Box title="静态属性" cls="pb-[13px]">
            <div className="grid grid-cols-[95px_170px_96px_150px] items-center gap-y-[13px] pt-4 pl-5 text-lg leading-6">
              <span className="pb-[2px]">填充颜色</span>
              <SwatchSelect label="填充颜色" value="青色" swatch="h-5 bg-[#007380]" cls="w-[150px]" />
              <span className="pb-[2px]">边线颜色</span>
              <SwatchSelect label="边线颜色" value="黑色" swatch="h-5 bg-black" cls="w-[150px]" />
              <span className="pb-[2px]">字符颜色</span>
              <div className="flex items-center gap-[6px]">
                <SwatchSelect label="字符颜色" value="黑色" swatch="h-5 bg-black" cls="w-[110px]" />
                <button
                  type="button"
                  aria-label="字体"
                  className="flex h-[33px] w-9 items-center justify-center border-t border-l border-r-2 border-b-2 border-t-white border-l-white border-r-[#555753] border-b-[#555753] bg-[#eef0ec]"
                >
                  <span className="flex h-6 w-6 items-center justify-center bg-[#c4c6c3]">
                    <Icon name="font" />
                  </span>
                </button>
              </div>
              <span className="pb-[2px]">边线线型</span>
              <SwatchSelect label="边线线型" value="实线" swatch="h-px bg-[#333]" cls="w-[150px]" />
            </div>
          </Box>
          <div className="mt-[19px] grid grid-cols-3 gap-6">
            <Box title="颜色动画连接">
              <div className="flex flex-col gap-4 pt-[13px] pb-[14px] pl-4">
                <Check label="填充颜色" />
                <Check label="边线颜色" />
                <Check label="字符颜色" />
              </div>
            </Box>
            <Box title="位置动画连接">
              <div className="flex flex-col gap-4 pt-[13px] pb-[14px] pl-[19px]">
                <Check label="水平移动" />
                <Check label="垂直移动" />
                <Check label="大小变化" />
              </div>
            </Box>
            <Box title="输入输出连接">
              <div className="flex flex-col gap-4 pt-[13px] pb-[14px] pl-7">
                <Check label="显示输出" />
                <Check label="按钮输入" />
                <Check label="按钮动作" />
              </div>
            </Box>
          </div>
          <Box title="特殊动画连接" cls="mt-[10px]">
            <div className="flex pt-4 pb-[15px] pl-9">
              <Check label="可见度" cls="w-[177px]" />
              <Check label="闪烁效果" />
            </div>
          </Box>
        </div>
        <div className="mt-3 flex justify-end gap-[3px]">
          {["检查(K)", "确认(Y)", "取消(C)", "帮助(H)"].map((t) => (
            <button
              key={t}
              type="button"
              className={`${SONG} h-[39px] w-[118px] border-t border-l border-r-2 border-b-2 border-t-white border-l-white border-r-[#6f706d] border-b-[#6f706d] bg-[#f0f2ee] pr-1 pb-[2px] text-lg leading-6`}
            >
              {t}
            </button>
          ))}
        </div>
      </div>
    </section>
  );
}

function CpuWidget() {
  return (
    <div className="absolute top-[706px] right-0 flex w-[145px] items-center">
      <div className="relative z-10 flex h-[76px] w-[76px] shrink-0 items-center justify-center rounded-full border-4 border-[#34353b] bg-linear-to-b from-[#26272d] to-[#44454e]">
        <div className="flex h-[66px] w-[66px] items-baseline justify-center rounded-full border-[3px] border-[#1c9ad8] pt-3 font-['Noto_Sans',sans-serif] text-white">
          <span className="text-[27px] leading-8 font-light">52</span>
          <span className="text-base leading-8">%</span>
        </div>
      </div>
      <div className="-ml-8 flex h-[52px] flex-1 flex-col justify-center rounded-r-2xl bg-linear-to-b from-[#38393b] to-[#1b1c20] pl-[34px]">
        <div className="flex items-center gap-[5px] pl-[6px]">
          <span className="text-base leading-5 text-[#4fd84f]">53℃</span>
          <svg viewBox="0 0 12 17" className="h-[17px] w-3" aria-hidden="true">
            <path d="M6 0c6 5 7 10 4 14-1 1-3 1-5 3C0 12 0 8 6 0z" fill="#35d435" />
            <path d="M7 4c0 5-1 9-3 12" stroke="#156a1a" fill="none" />
          </svg>
        </div>
        <span className="text-sm leading-5 whitespace-nowrap text-[#9b9ca0]">CPU温度</span>
      </div>
    </div>
  );
}

function StatusBar() {
  const field = "h-7 w-[52px] border-t-2 border-l-2 border-[#777875] bg-white pl-1 font-['Liberation_Sans',sans-serif] text-lg leading-6";
  return (
    <div className="flex h-5 shrink-0 items-start overflow-hidden border-t-2 border-white bg-[#eff1ed] text-lg leading-8">
      <span className="w-[1191px]">准备就绪, 等待操作.</span>
      <span className="w-[184px]">类型:标签</span>
      <span className="w-[180px]">名称:控件0</span>
      <svg viewBox="0 0 20 20" className="mt-[3px] h-5 w-5" aria-hidden="true">
        <path d="M0 8h14M7 1v14M14 8h5v8" stroke="#333" strokeDasharray="5 1" fill="none" />
      </svg>
      <input aria-label="X" defaultValue="232" className={`${field} mt-[5px] ml-[13px]`} />
      <input aria-label="Y" defaultValue="134" className={`${field} mt-[5px] ml-[11px]`} />
      <svg viewBox="0 0 23 20" className="mt-[3px] ml-3 h-5 w-[23px]" aria-hidden="true">
        <path d="M9 0v8M21 0v8M11 4h8M0 10h8M4 10v8M10 12h12" stroke="#333" fill="none" />
        <path d="M18 1v6l3-3z" fill="#333" />
      </svg>
      <input aria-label="宽" defaultValue="383" className={`${field} mt-[5px] ml-[10px]`} />
      <input aria-label="高" defaultValue="129" className={`${field} mt-[5px] ml-3`} />
    </div>
  );
}

function Banner() {
  const word = "font-['Lato',sans-serif] text-[32px] leading-[67px] font-black whitespace-nowrap text-[#f2f8fc]";
  return (
    <footer className="relative flex h-[67px] shrink-0 items-start overflow-hidden border-t border-[#0f5068]">
      <svg viewBox="0 0 1920 67" preserveAspectRatio="none" className="absolute inset-0 h-full w-full" aria-hidden="true">
        <defs>
          <linearGradient id="sea">
            <stop offset="0" stopColor="#4199b0" />
            <stop offset=".22" stopColor="#1b6a87" />
            <stop offset=".38" stopColor="#0d4763" />
            <stop offset=".62" stopColor="#0d4763" />
            <stop offset=".78" stopColor="#1b6a87" />
            <stop offset="1" stopColor="#4199b0" />
          </linearGradient>
          <linearGradient id="edgeL">
            <stop offset="0" stopColor="#06203a" stopOpacity="0" />
            <stop offset="1" stopColor="#041430" />
          </linearGradient>
          <linearGradient id="edgeR">
            <stop offset="0" stopColor="#041430" />
            <stop offset="1" stopColor="#06203a" stopOpacity="0" />
          </linearGradient>
        </defs>
        <path d="M0 0h1920v67H0z" fill="url(#sea)" />
        <path d="M590 56h139l44-45h60v56H590z" fill="url(#edgeL)" />
        <path d="M1320 56h-143l-45-45h-60v56h248z" fill="url(#edgeR)" />
        <path d="M817 0h271l64 67H753z" fill="#010204" />
      </svg>
      <div className="relative ml-5 flex h-[38px] w-[467px] items-center bg-white pl-[3px] text-[28px] leading-[38px] font-bold whitespace-nowrap">
        <span className="text-[#2f9560]">工控产品</span>
        <span className="ml-4 text-[#2d2de0]">电气工程</span>
        <span className="ml-[10px] font-['DejaVu_Sans',sans-serif] text-[27px] text-[#fb6a0b]">15021230050</span>
      </div>
      <span className={`${word} relative ml-4 w-[218px]`}>DAODAO LIVE</span>
      <svg viewBox="0 0 50 58" className="relative mt-1 ml-[109px] h-[58px] w-[50px]" aria-hidden="true">
        <path d="M2 5h18c16 0 26 8 26 24S36 53 20 53H6V18" fill="none" stroke="#45a9f5" strokeWidth="8" />
        <path d="M5 18l16 12" stroke="#2f8ee8" strokeWidth="8" strokeLinecap="round" />
        <path d="M22 26l-4 6" stroke="#5cbcff" strokeWidth="8" strokeLinecap="round" />
      </svg>
      <span className="relative ml-[13px] w-[181px] text-[45px] leading-[66px] font-medium whitespace-nowrap text-white">叨叨直播</span>
      <span className={`${word} relative ml-[130px]`}>DAODAO LIVE</span>
    </footer>
  );
}

export default function App() {
  return (
    <div className={`${UI} relative flex h-screen flex-col overflow-hidden bg-[#a8aaa4] text-black`}>
      <TitleBar />
      <MenuBar />
      <div className="h-[2px] shrink-0 bg-[#d9dde2]" />
      <Toolbars />
      <main className="relative min-h-0 flex-1">
        <DocumentWindow />
      </main>
      <StatusBar />
      <Banner />
      <Toolbox />
      <Dialog />
      <CpuWidget />
      <span className="absolute right-0 bottom-[79px] h-[56px] w-[10px] rounded-full bg-[#343632]" />
      <svg viewBox="0 0 17 27" className="absolute top-[381px] left-[907px] h-[27px] w-[17px]" aria-hidden="true">
        <path d="M1 1v21l5-5 4 9 3-2-3-8h6z" fill="#fff" stroke="#444" />
      </svg>
    </div>
  );
}
